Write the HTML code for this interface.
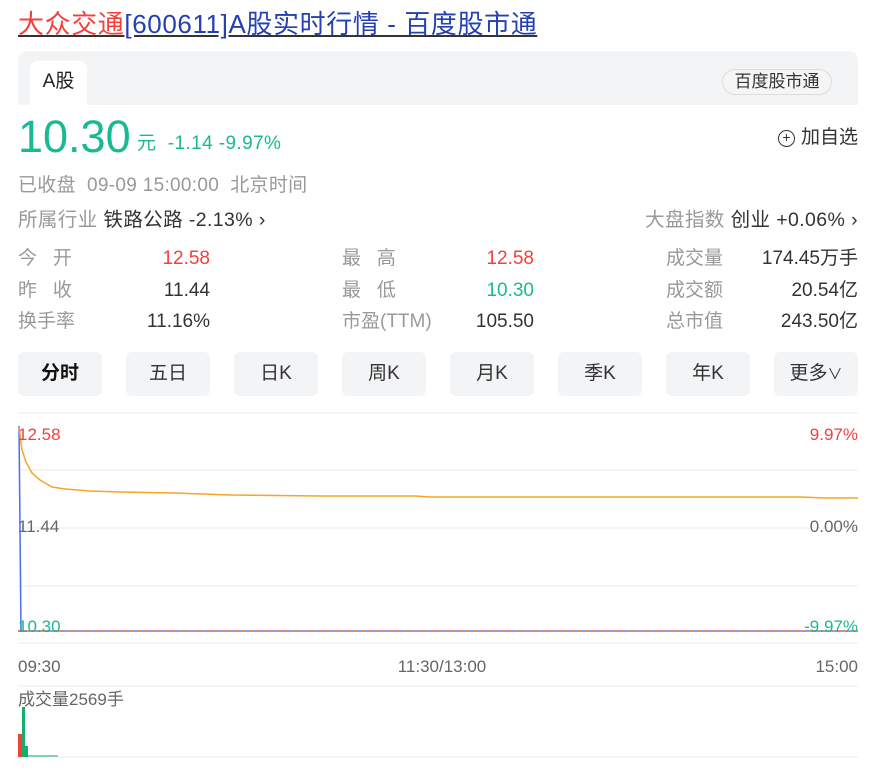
<!DOCTYPE html>
<html><head><meta charset="utf-8"><style>
*{margin:0;padding:0;box-sizing:border-box}
body{width:876px;height:774px;background:#fff;font-family:"Liberation Sans","Noto Sans CJK SC",sans-serif;position:relative;overflow:hidden;color:#333}
.a{position:absolute;white-space:nowrap}
.g{color:#999}
.btn{position:absolute;top:352px;width:84px;height:44px;background:#f3f4f6;border-radius:6px;font-size:19px;line-height:44px;text-align:center;color:#333}
</style></head><body>
<div class="a" style="left:18px;top:7px;font-size:26px;letter-spacing:0.6px;line-height:34px;text-decoration:underline"><span style="color:#f43f3b">大众交通</span><span style="color:#2440b3">[600611]A股实时行情 - 百度股市通</span></div>
<div class="a" style="left:18px;top:51px;width:840px;height:54px;background:#f3f4f6;border-radius:10px 10px 0 0"></div>
<div class="a" style="left:30px;top:61px;width:57px;height:44px;background:#fff;border-radius:8px 8px 0 0;font-size:19px;line-height:42px;text-align:center;color:#222">A股</div>
<div class="a" style="left:722px;top:69px;width:110px;height:26px;border:1px solid #ddd;border-radius:13px;font-size:17px;line-height:24px;text-align:center;background:#f5f5f5">百度股市通</div>
<div class="a" style="left:18px;top:111px;font-size:45px;line-height:52px;color:#19b993">10.30</div>
<div class="a" style="left:137px;top:132px;font-size:19px;letter-spacing:0.4px;line-height:24px;color:#19b993">元&nbsp; -1.14 -9.97%</div>
<div class="a" style="right:18px;top:126px;font-size:19px;line-height:24px;color:#333"><span style="display:inline-block;width:17px;height:17px;border:1.5px solid #333;border-radius:50%;font-size:14px;line-height:13px;text-align:center;vertical-align:1px;margin-right:6px">+</span>加自选</div>
<div class="a g" style="left:18px;top:174px;font-size:19px;letter-spacing:0.3px;line-height:24px">已收盘&nbsp; 09-09 15:00:00&nbsp; 北京时间</div>
<div class="a" style="left:18px;top:208px;font-size:19.5px;letter-spacing:0.4px;line-height:24px"><span class="g">所属行业</span> 铁路公路 -2.13% ›</div>
<div class="a" style="right:18px;top:208px;font-size:19.5px;letter-spacing:0.4px;line-height:24px"><span class="g">大盘指数</span> 创业 +0.06% ›</div>
<div class="a" style="top:243px;left:18px;font-size:19px;line-height:31.5px;width:840px">
<div class="a g" style="left:0">今&nbsp;&nbsp;&nbsp;开<br>昨&nbsp;&nbsp;&nbsp;收<br>换手率</div>
<div class="a" style="right:648px;text-align:right"><span style="color:#f43f3b">12.58</span><br>11.44<br>11.16%</div>
<div class="a g" style="left:324px">最&nbsp;&nbsp;&nbsp;高<br>最&nbsp;&nbsp;&nbsp;低<br>市盈(TTM)</div>
<div class="a" style="right:324px;text-align:right"><span style="color:#f43f3b">12.58</span><br><span style="color:#19b993">10.30</span><br>105.50</div>
<div class="a g" style="left:648px">成交量<br>成交额<br>总市值</div>
<div class="a" style="right:0;text-align:right">174.45万手<br>20.54亿<br>243.50亿</div>
</div>
<div class="btn" style="left:18px;font-weight:bold;color:#111">分时</div>
<div class="btn" style="left:126px">五日</div>
<div class="btn" style="left:234px">日K</div>
<div class="btn" style="left:342px">周K</div>
<div class="btn" style="left:450px">月K</div>
<div class="btn" style="left:558px">季K</div>
<div class="btn" style="left:666px">年K</div>
<div class="btn" style="left:774px">更多<span style="font-size:15px">∨</span></div>
<svg class="a" style="left:0;top:400px" width="876" height="374">
<g stroke="#f2f2f2" stroke-width="1.5">
<line x1="18" y1="13" x2="858" y2="13"/><line x1="18" y1="70" x2="858" y2="70"/><line x1="18" y1="128" x2="858" y2="128"/><line x1="18" y1="186" x2="858" y2="186"/><line x1="18" y1="243" x2="858" y2="243"/><line x1="18" y1="286" x2="858" y2="286"/><line x1="18" y1="357" x2="858" y2="357"/></g>
<line x1="18" y1="231" x2="858" y2="231" stroke="#6a7cf0" stroke-width="1.5"/>
<line x1="18" y1="231" x2="858" y2="231" stroke="#f07a3a" stroke-width="1.5" stroke-dasharray="4,3"/>
<polyline fill="none" stroke="#4a6cf7" stroke-width="1.5" points="19,26 21,231"/>
<polyline fill="none" stroke="#f5a623" stroke-width="1.5" points="19,27 22,50 26,62 32,73 40,80 52,87 65,89 90,91 120,92 175,93 230,95 320,96 415,96 430,97 670,97 800,97 825,98 858,98"/>
<g font-size="17">
<text x="18" y="40" fill="#f43f3b">12.58</text><text x="858" y="40" fill="#f43f3b" text-anchor="end">9.97%</text>
<text x="18" y="132" fill="#666">11.44</text><text x="858" y="132" fill="#666" text-anchor="end">0.00%</text>
<text x="18" y="232" fill="#19b993">10.30</text><text x="858" y="232" fill="#19b993" text-anchor="end">-9.97%</text>
<text x="18" y="272" fill="#666">09:30</text><text x="442" y="272" fill="#666" text-anchor="middle">11:30/13:00</text><text x="858" y="272" fill="#666" text-anchor="end">15:00</text>
<text x="18" y="305" fill="#666">成交量2569手</text></g>
<rect x="18" y="334" width="4" height="23" fill="#f43f3b"/>
<rect x="22" y="307" width="3" height="50" fill="#14b06a"/>
<rect x="25" y="346" width="3" height="11" fill="#14b06a"/>
<rect x="28" y="355" width="30" height="2" fill="#7fd3ad"/>
</svg>
</body></html>
